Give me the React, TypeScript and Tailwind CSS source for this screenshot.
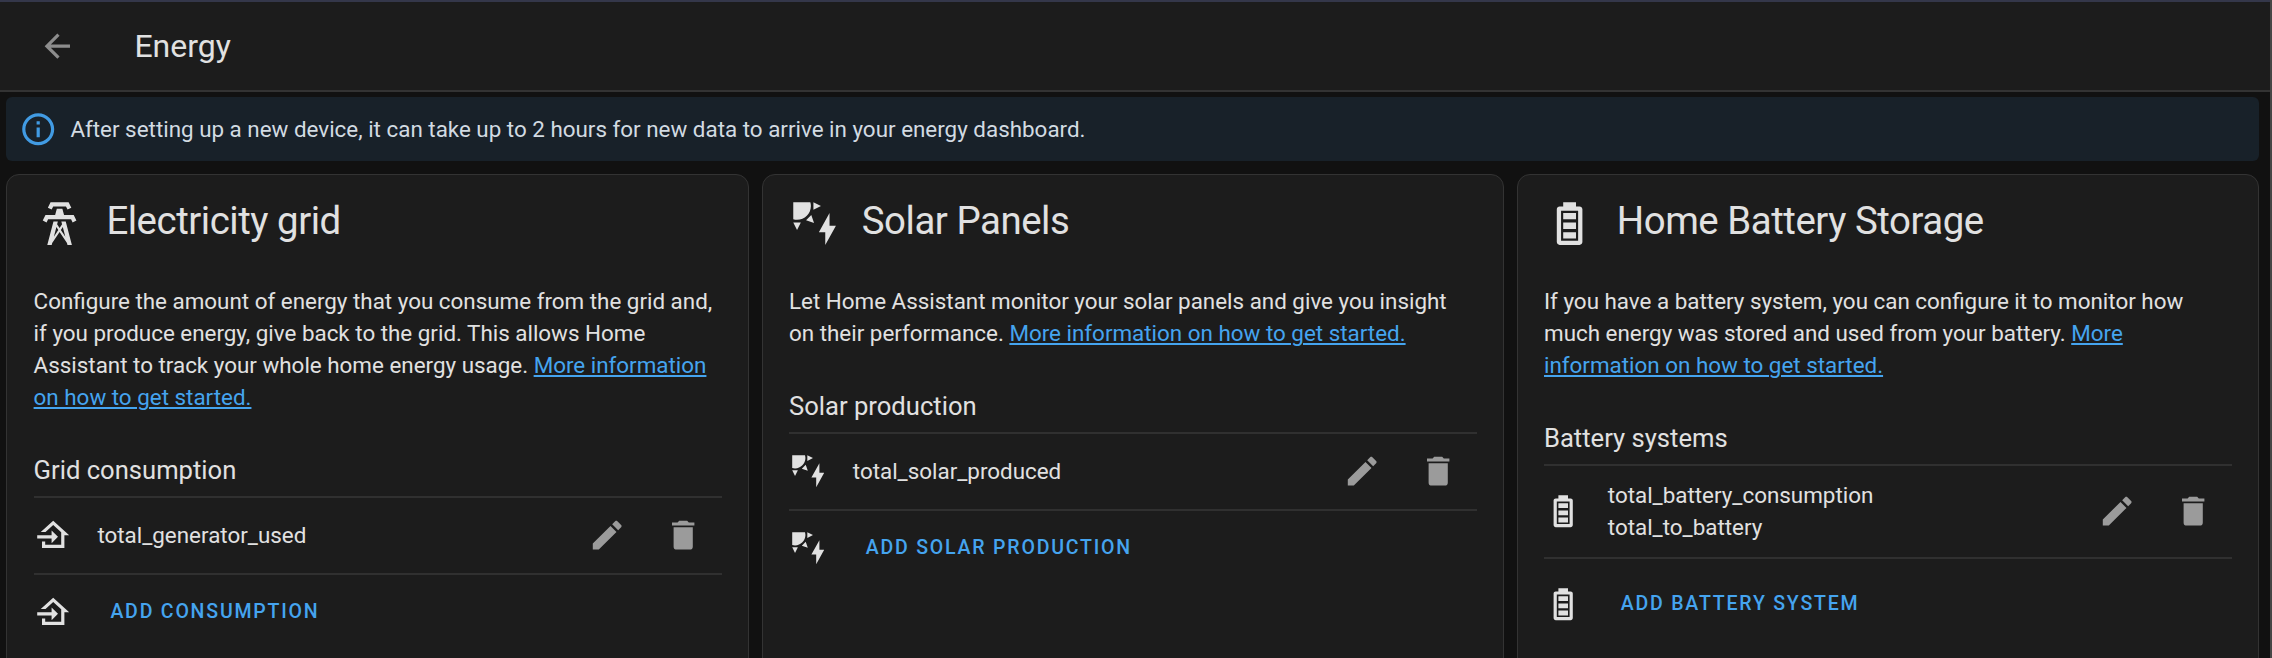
import type { ReactNode } from 'react';

const icons = {
  back: 'M20,11V13H8L13.5,18.5L12.08,19.92L4.16,12L12.08,4.08L13.5,5.5L8,11H20Z',
  info: 'M11,9H13V7H11M12,20C7.59,20 4,16.41 4,12C4,7.59 7.59,4 12,4C16.41,4 20,7.59 20,12C20,16.41 16.41,20 12,20M12,2A10,10 0 0,0 2,12A10,10 0 0,0 12,22A10,10 0 0,0 22,12A10,10 0 0,0 12,2M11,17H13V11H11V17Z',
  tower:
    'M8.28,5.45L6.5,4.55L7.76,2H16.23L17.5,4.55L15.72,5.44L15,4H9L8.28,5.45M18.62,8H14.09L13.3,5H10.7L9.91,8H5.38L4.1,10.55L5.89,11.44L6.62,10H17.38L18.1,11.45L19.89,10.56L18.62,8M17.77,22H15.7L15.46,21.1L12,15.9L8.53,21.1L8.3,22H6.23L9.12,11H11.19L10.83,12.35L12,14.1L13.16,12.35L12.81,11H14.88L17.77,22M11.4,15L10.5,13.65L9.32,18.13L11.4,15M14.68,18.12L13.5,13.64L12.6,15L14.68,18.12Z',
  solar:
    'M11.45,2V5.55L15,3.77L11.45,2M10.45,8L8,10.46L11.75,11.71L10.45,8M2,11.45L3.77,15L5.55,11.45H2M10,2H2V10C2.57,10.17 3.17,10.25 3.77,10.25C7.35,10.26 10.26,7.35 10.27,3.75C10.26,3.16 10.17,2.57 10,2M17,22V16H14L19,7V13H22L17,22Z',
  battery:
    'M16,20H8V6H16M16.67,4H15V2H9V4H7.33C6.6,4 6,4.6 6,5.33V20.67C6,21.4 6.6,22 7.33,22H16.67C17.41,22 18,21.41 18,20.67V5.33C18,4.6 17.4,4 16.67,4M15,16H9V19H15V16M15,7H9V10H15V7M15,11.5H9V14.5H15V11.5Z',
  home: 'M15,13L11,17V14H2V12H11V9L15,13M5,20V16H7V18H17V10.19L12,5.69L7.21,10H4.22L12,3L22,12H19V20H5Z',
  pencil:
    'M20.71,7.04C21.1,6.65 21.1,6 20.71,5.63L18.37,3.29C18,2.9 17.35,2.9 16.96,3.29L15.12,5.12L18.87,8.87M3,17.25V21H6.75L17.81,9.93L14.06,6.18L3,17.25Z',
  trash: 'M19,4H15.5L14.5,3H9.5L8.5,4H5V6H19M6,19A2,2 0 0,0 8,21H16A2,2 0 0,0 18,19V7H6V19Z',
};

type IconName = keyof typeof icons;

function Icon({ name, className = 'size-[38.4px]' }: { name: IconName; className?: string }) {
  return (
    <svg viewBox="0 0 24 24" fill="currentColor" className={`shrink-0 ${className}`}>
      <path d={icons[name]} />
    </svg>
  );
}

interface SourceCardProps {
  icon: IconName;
  rowIcon: IconName;
  title: string;
  section: string;
  sources: string[];
  action: string;
  className?: string;
  rowClass?: string;
  addClass?: string;
  children: ReactNode;
}

function SourceCard({
  icon,
  rowIcon,
  title,
  section,
  sources,
  action,
  className = 'pl-[26px]',
  rowClass = 'h-[77px]',
  addClass = 'h-[76px]',
  children,
}: SourceCardProps) {
  return (
    <section
      className={`h-[560px] rounded-[13px] border border-[#333333] bg-[#1c1c1c] pr-[26px] pt-[23px] ${className}`}
    >
      <h2 className="flex h-[51px] items-center text-[38.4px] leading-[45px] tracking-[-0.012em]">
        <Icon name={icon} className="mr-[21.6px] size-[51.2px]" />
        <span className="pb-[6px]">{title}</span>
      </h2>
      <p className="mt-[36.4px] text-[22.4px] leading-8">{children}</p>
      <h3 className="mt-[35px] h-[47.6px] text-[25.6px] leading-[45px]">{section}</h3>
      <div className={`flex items-center border-t-2 border-[#303030] ${rowClass}`}>
        <Icon name={rowIcon} />
        <div className="ml-[25.4px] flex-1 text-[22.4px] leading-8">
          {sources.map((source) => (
            <div key={source}>{source}</div>
          ))}
        </div>
        <button className="flex w-[76.8px] justify-center text-[#9b9b9b]">
          <Icon name="pencil" />
        </button>
        <button className="flex w-[76.8px] justify-center text-[#9b9b9b]">
          <Icon name="trash" />
        </button>
      </div>
      <div className={`flex items-center border-t-2 border-[#303030] ${addClass}`}>
        <Icon name={rowIcon} />
        <button className="ml-[38.4px] text-[19.55px] font-medium uppercase tracking-[0.0915em] text-[#45a4ef]">
          {action}
        </button>
      </div>
    </section>
  );
}

function DocsLink() {
  return (
    <a href="#" className="text-[#45a4ef] underline decoration-2 underline-offset-2">
      More information on how to get started.
    </a>
  );
}

export default function App() {
  return (
    <div className="h-[658px] w-[2272px] overflow-hidden border-r-2 border-[#464646] bg-[#111111] font-[Roboto,sans-serif] text-[#e1e1e1]">
      <header className="flex h-[92px] items-center border-b-2 border-t-2 border-b-[#333333] border-t-[#34374a] bg-[#1c1c1c] pl-[38.4px]">
        <Icon name="back" className="size-[38.4px] text-[#8d8d8d]" />
        <h1 className="ml-[57.6px] text-[32px] leading-10">Energy</h1>
      </header>
      <main className="pl-1.5 pt-[5px]">
        <div className="flex h-16 w-[2253px] items-center rounded-md bg-[#182129] pl-[13px]">
          <Icon name="info" className="size-[38.4px] text-[#419be3]" />
          <p className="ml-[13px] text-[22.4px] leading-8 text-[#d2dbe2]">
            After setting up a new device, it can take up to 2 hours for new data to arrive in your
            energy dashboard.
          </p>
        </div>
        <div className="mt-[13px] grid grid-cols-[743px_742px_742px] gap-[13px]">
          <SourceCard
            icon="tower"
            rowIcon="home"
            title="Electricity grid"
            section="Grid consumption"
            sources={['total_generator_used']}
            action="Add consumption"
            className="pl-[26.6px]"
          >
            Configure the amount of energy that you consume from the grid and, if you produce
            energy, give back to the grid. This allows Home Assistant to track your whole home
            energy usage. <DocsLink />
          </SourceCard>
          <SourceCard
            icon="solar"
            rowIcon="solar"
            title="Solar Panels"
            section="Solar production"
            sources={['total_solar_produced']}
            action="Add solar production"
          >
            Let Home Assistant monitor your solar panels and give you insight on their performance.{' '}
            <DocsLink />
          </SourceCard>
          <SourceCard
            icon="battery"
            rowIcon="battery"
            title="Home Battery Storage"
            section="Battery systems"
            sources={['total_battery_consumption', 'total_to_battery']}
            action="Add battery system"
            rowClass="h-[93px]"
            addClass="h-[92px]"
          >
            If you have a battery system, you can configure it to monitor how much energy was stored
            and used from your battery. <DocsLink />
          </SourceCard>
        </div>
      </main>
    </div>
  );
}
